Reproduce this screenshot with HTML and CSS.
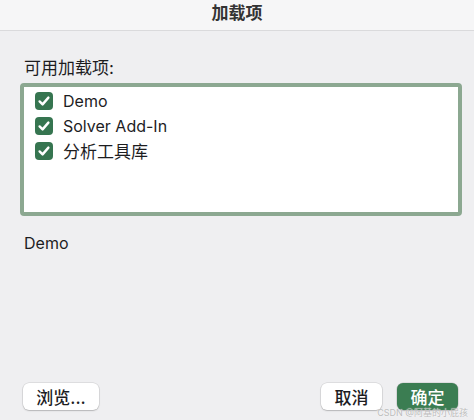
FILE: index.html
```html
<!DOCTYPE html>
<html lang="zh">
<head>
<meta charset="utf-8">
<link rel="stylesheet" href="styles.css">
</head>
<body>
<div class="dialog">
  <div class="titlebar">加载项</div>
  <div class="content">
    <div class="label">可用加载项:</div>
    <div class="listbox">
      <div class="row"><span class="check"><svg viewBox="0 0 18 18" width="18" height="18"><path d="M4.6 9.4 L7.6 12.4 L13.4 5.6" fill="none" stroke="#fff" stroke-width="2.4" stroke-linecap="round" stroke-linejoin="round"/></svg></span><span class="text">Demo</span></div>
      <div class="row"><span class="check"><svg viewBox="0 0 18 18" width="18" height="18"><path d="M4.6 9.4 L7.6 12.4 L13.4 5.6" fill="none" stroke="#fff" stroke-width="2.4" stroke-linecap="round" stroke-linejoin="round"/></svg></span><span class="text">Solver Add-In</span></div>
      <div class="row"><span class="check"><svg viewBox="0 0 18 18" width="18" height="18"><path d="M4.6 9.4 L7.6 12.4 L13.4 5.6" fill="none" stroke="#fff" stroke-width="2.4" stroke-linecap="round" stroke-linejoin="round"/></svg></span><span class="text cjk">分析工具库</span></div>
    </div>
    <div class="desc">Demo</div>
  </div>
  <div class="footer">
    <button class="btn browse">浏览...</button>
    <div class="spacer"></div>
    <button class="btn">取消</button>
    <button class="btn primary">确定</button>
  </div>
  <div class="watermark">CSDN @阿基的小屁孩</div>
</div>
</body>
</html>
```
FILE: styles.css
```css
html, body {
  margin: 0;
  padding: 0;
}
body {
  width: 474px;
  height: 420px;
  overflow: hidden;
  background: #efeff1;
  font-family: Inter, "Noto Sans CJK SC", sans-serif;
  color: #1d1d1f;
}
.dialog {
  position: relative;
  display: flex;
  flex-direction: column;
  height: 420px;
}
.titlebar {
  height: 30px;
  line-height: 26px;
  text-align: center;
  font-size: 17px;
  font-weight: 600;
  color: #333;
  background: #f6f6f7;
  border-bottom: 1px solid #dadadc;
}
.content {
  padding: 27px 12px 0 20px;
}
.label {
  font-size: 17px;
  line-height: 20px;
  padding-left: 4px;
}
.listbox {
  margin-top: 5px;
  border: 4px solid #8ca891;
  border-radius: 4px;
  background: #fff;
  padding-top: 1px;
  padding-left: 11px;
  box-sizing: content-box;
  height: 124px;
}
.row {
  display: flex;
  align-items: center;
  height: 25px;
  font-size: 16px;
}
.check {
  width: 18px;
  height: 18px;
  border-radius: 4px;
  background: #367550;
  display: flex;
}
.text {
  margin-left: 10px;
}
.cjk {
  font-size: 17px;
}
.desc {
  margin-top: 17px;
  padding-left: 4px;
  font-size: 16px;
  line-height: 20px;
}
.footer {
  margin-top: auto;
  display: flex;
  align-items: center;
  gap: 15px;
  padding: 0 16px 10px 23px;
}
.spacer {
  flex: 1;
}
.btn {
  height: 27px;
  width: 61px;
  border: none;
  border-radius: 6px;
  background: #fff;
  font-family: Inter, "Noto Sans CJK SC", sans-serif;
  font-size: 17px;
  font-weight: 500;
  color: #1d1d1f;
  padding: 0;
  box-shadow: 0 0 0 0.5px rgba(0,0,0,0.14), 0 1px 1.5px rgba(0,0,0,0.18);
}
.btn.browse {
  width: 76px;
}
.btn.primary {
  background: #3b7d52;
  color: #fff;
}
.watermark {
  position: absolute;
  right: 6px;
  bottom: 1px;
  font-size: 9px;
  color: rgba(170,170,170,0.8);
  text-shadow: 0 0 1px #fff;
}
```
